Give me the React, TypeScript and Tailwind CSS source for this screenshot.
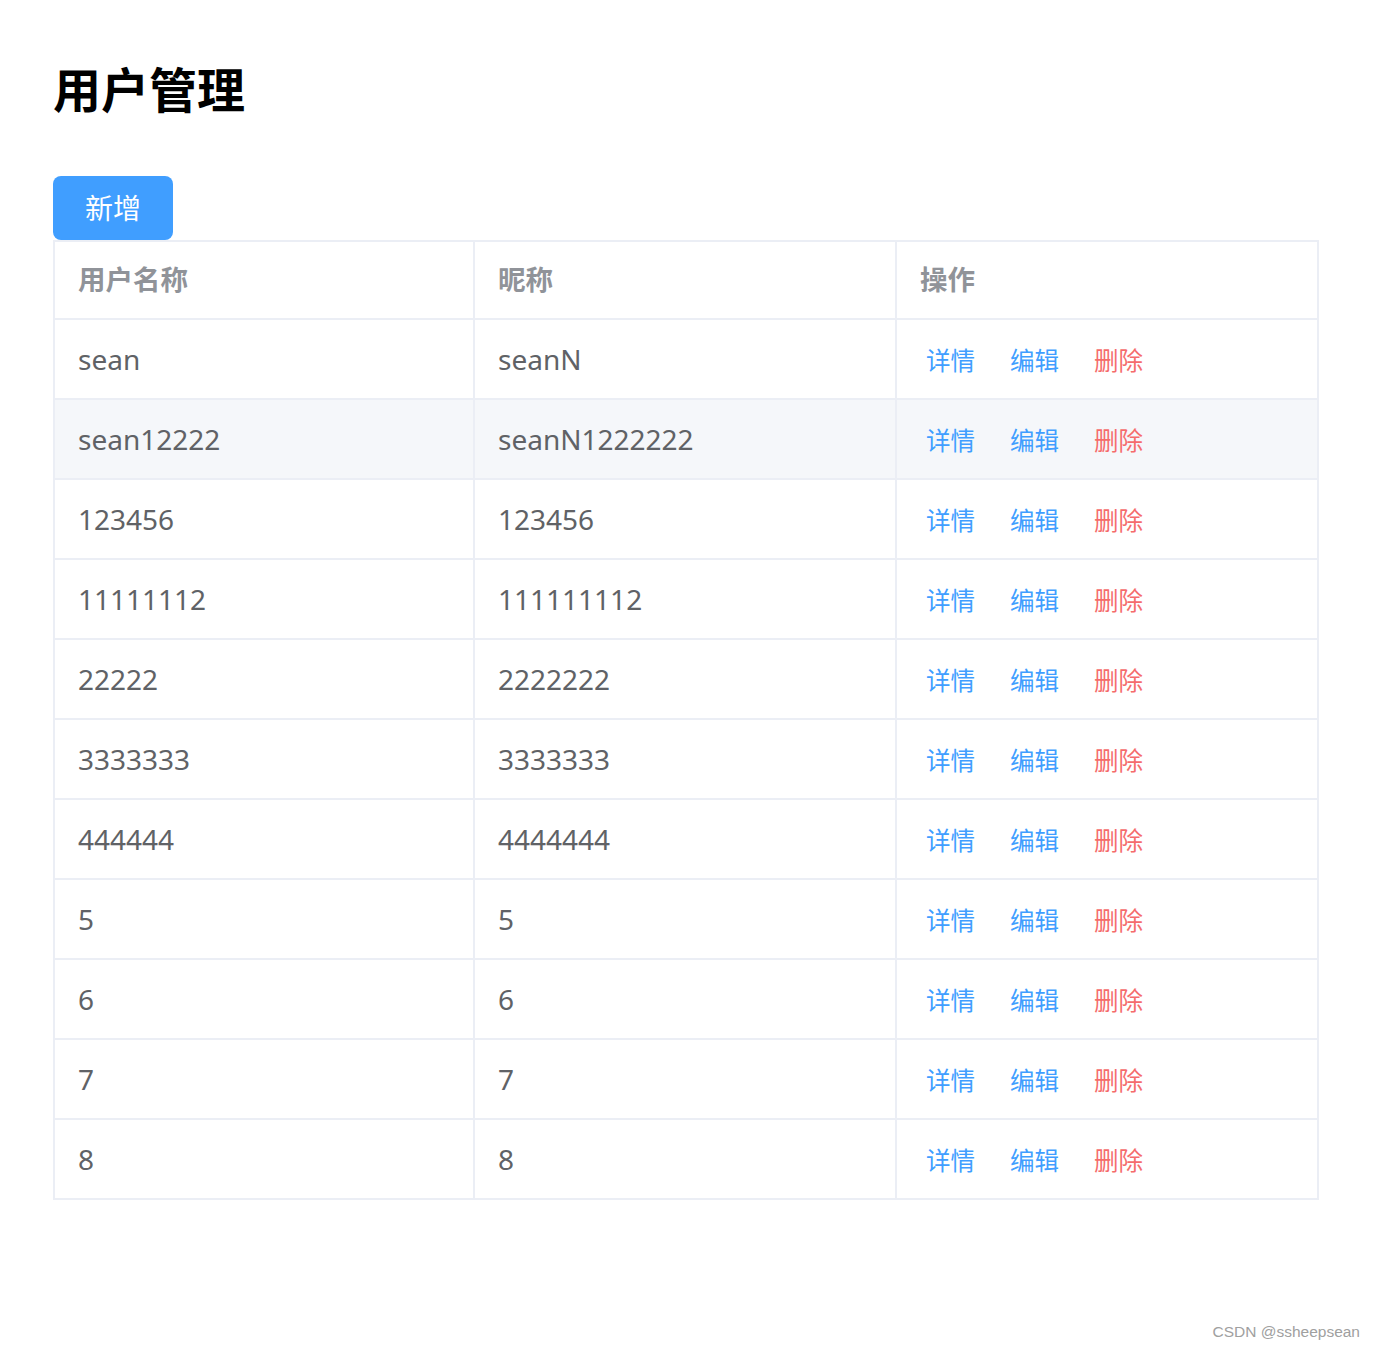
const users = [
  { name: 'sean', nick: 'seanN' },
  { name: 'sean12222', nick: 'seanN1222222' },
  { name: '123456', nick: '123456' },
  { name: '11111112', nick: '111111112' },
  { name: '22222', nick: '2222222' },
  { name: '3333333', nick: '3333333' },
  { name: '444444', nick: '4444444' },
  { name: '5', nick: '5' },
  { name: '6', nick: '6' },
  { name: '7', nick: '7' },
  { name: '8', nick: '8' },
];

const font = { fontFamily: '"Noto Sans", "Noto Sans CJK SC", sans-serif' };

export default function App() {
  return (
    <div className="relative min-h-[1351px] bg-white px-[53px] pt-[66px]" style={font}>
      <h1 className="text-[48px] leading-[48px] font-bold text-black">用户管理</h1>

      <button className="mt-[62px] flex h-[64px] w-[120px] items-center justify-center rounded-[8px] bg-[#409eff] text-[28px] text-white">
        新增
      </button>

      <div className="w-[1266px] border-x-2 border-t-2 border-[#ebeef5]">
        {/* Header */}
        <div className="grid h-[78px] grid-cols-[420px_422px_1fr] border-b-2 border-[#ebeef5] text-[27.5px] font-bold text-[#909399]">
          <div className="flex items-center border-r-2 border-[#ebeef5] pl-[23px]">用户名称</div>
          <div className="flex items-center border-r-2 border-[#ebeef5] pl-[23px]">昵称</div>
          <div className="flex items-center pl-[23px]">操作</div>
        </div>

        {/* Rows */}
        {users.map((u, i) => (
          <div
            key={i}
            className={`grid h-[80px] grid-cols-[420px_422px_1fr] border-b-2 border-[#ebeef5] text-[28px] text-[#606266] ${
              i === 1 ? 'bg-[#f5f7fa]' : 'bg-white'
            }`}
          >
            <div className="flex items-center border-r-2 border-[#ebeef5] pl-[23px]">{u.name}</div>
            <div className="flex items-center border-r-2 border-[#ebeef5] pl-[23px]">{u.nick}</div>
            <div className="flex items-center gap-[35px] pl-[29px] pt-[5px] text-[24.5px]">
              <span className="text-[#409eff]">详情</span>
              <span className="text-[#409eff]">编辑</span>
              <span className="text-[#f56c6c]">删除</span>
            </div>
          </div>
        ))}
      </div>

      <div
        className="absolute bottom-[8px] right-[15px] text-[15.5px] text-[#a0a0a0]"
        style={{ fontFamily: '"Liberation Sans", Arial, sans-serif' }}
      >
        CSDN @ssheepsean
      </div>
    </div>
  );
}
